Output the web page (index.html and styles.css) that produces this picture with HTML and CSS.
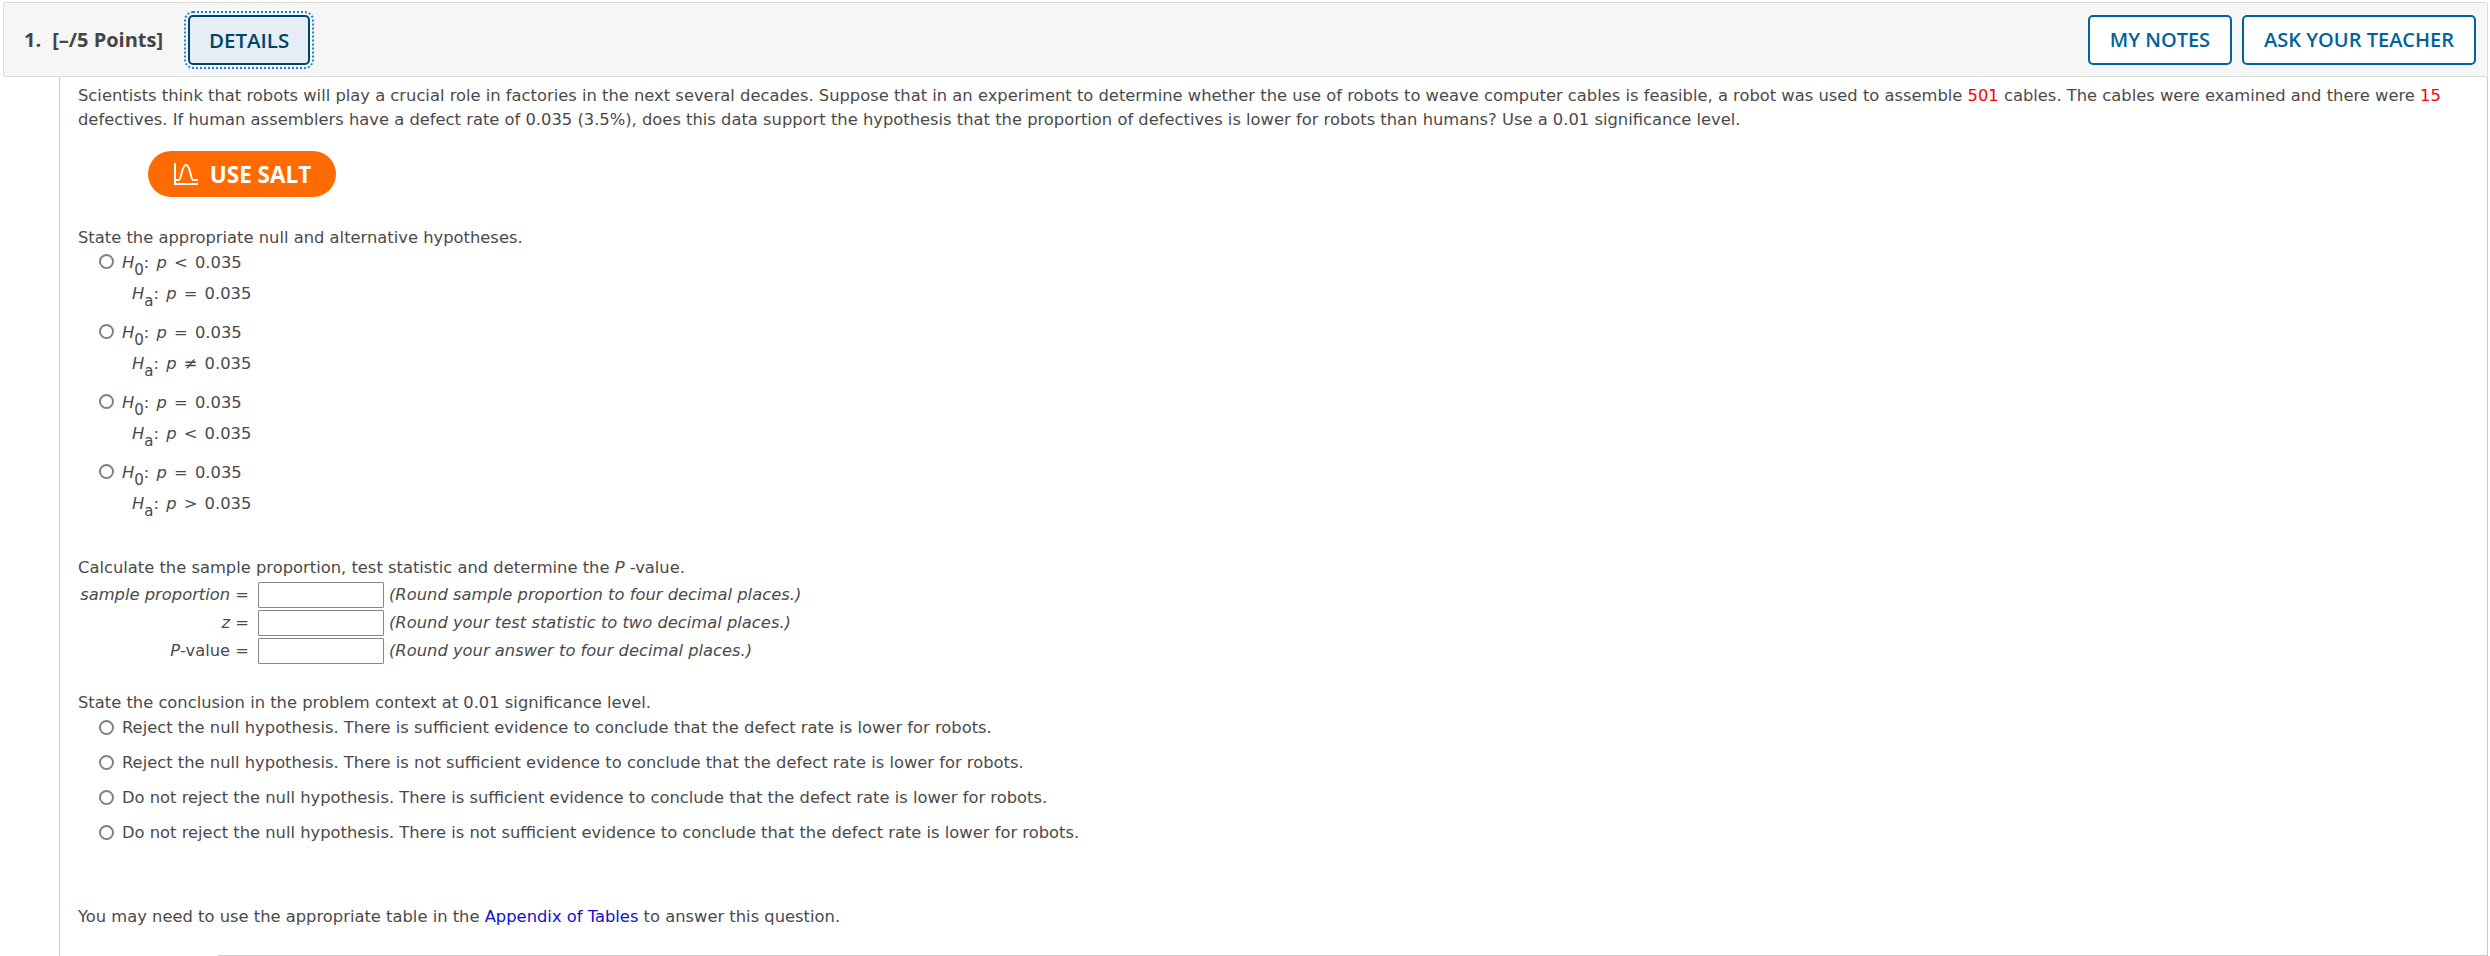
FILE: index.html
```html
<!DOCTYPE html>
<html lang="en">
<head>
  <meta charset="UTF-8">
  <title>Question 1</title>
  <link rel="stylesheet" href="styles.css">
</head>
<body>
  <div class="question-bar">
    <div class="question-title">
      <span class="question-num">1.</span>
      <span>[–/5 Points]</span>
      <button class="btn btn-details">DETAILS</button>
    </div>
    <div class="question-actions">
      <button class="btn">MY NOTES</button>
      <button class="btn">ASK YOUR TEACHER</button>
    </div>
  </div>

  <div class="question-body">
    <p class="prompt">Scientists think that robots will play a crucial role in factories in the next several decades. Suppose that in an experiment to determine whether the use of robots to weave computer cables is feasible, a robot was used to assemble <span class="red">501</span> cables. The cables were examined and there were <span class="red">15</span> defectives. If human assemblers have a defect rate of 0.035 (3.5%), does this data support the hypothesis that the proportion of defectives is lower for robots than humans? Use a 0.01 significance level.</p>

    <button class="salt">
      <svg width="26" height="22" viewBox="0 0 26 22" fill="none" stroke="#fff" stroke-width="2">
        <path d="M2 0V21H25"/>
        <path d="M2 17H6C8.500 17 8.500 2 13 2C17.500 2 17.500 17 20 17H25"/>
      </svg>
      USE SALT
    </button>

    <p class="section-label hyp-label">State the appropriate null and alternative hypotheses.</p>
    <div class="hyp-list">
      <div class="hyp">
        <div class="hyp-line"><span class="radio"></span><i>H</i><sub>0</sub>: <i>p</i> &lt; 0.035</div>
        <div class="hyp-line alt"><i>H</i><sub>a</sub>: <i>p</i> = 0.035</div>
      </div>
      <div class="hyp">
        <div class="hyp-line"><span class="radio"></span><i>H</i><sub>0</sub>: <i>p</i> = 0.035</div>
        <div class="hyp-line alt"><i>H</i><sub>a</sub>: <i>p</i> ≠ 0.035</div>
      </div>
      <div class="hyp">
        <div class="hyp-line"><span class="radio"></span><i>H</i><sub>0</sub>: <i>p</i> = 0.035</div>
        <div class="hyp-line alt"><i>H</i><sub>a</sub>: <i>p</i> &lt; 0.035</div>
      </div>
      <div class="hyp">
        <div class="hyp-line"><span class="radio"></span><i>H</i><sub>0</sub>: <i>p</i> = 0.035</div>
        <div class="hyp-line alt"><i>H</i><sub>a</sub>: <i>p</i> &gt; 0.035</div>
      </div>
    </div>

    <p class="section-label calc-label">Calculate the sample proportion, test statistic and determine the <i>P</i> -value.</p>
    <div class="calc-grid">
      <span class="calc-name"><i>sample proportion</i> =</span>
      <input type="text" class="answer">
      <i>(Round sample proportion to four decimal places.)</i>
      <span class="calc-name"><i>z</i> =</span>
      <input type="text" class="answer">
      <i>(Round your test statistic to two decimal places.)</i>
      <span class="calc-name"><i>P</i>-value =</span>
      <input type="text" class="answer">
      <i>(Round your answer to four decimal places.)</i>
    </div>

    <p class="section-label concl-label">State the conclusion in the problem context at 0.01 significance level.</p>
    <div class="concl-list">
      <div class="concl"><span class="radio"></span>Reject the null hypothesis. There is sufficient evidence to conclude that the defect rate is lower for robots.</div>
      <div class="concl"><span class="radio"></span>Reject the null hypothesis. There is not sufficient evidence to conclude that the defect rate is lower for robots.</div>
      <div class="concl"><span class="radio"></span>Do not reject the null hypothesis. There is sufficient evidence to conclude that the defect rate is lower for robots.</div>
      <div class="concl"><span class="radio"></span>Do not reject the null hypothesis. There is not sufficient evidence to conclude that the defect rate is lower for robots.</div>
    </div>

    <p class="section-label appendix">You may need to use the appropriate table in the <a href="#">Appendix of Tables</a> to answer this question.</p>
    <div class="bottom-rule"></div>
  </div>
</body>
</html>
```

FILE: styles.css
```css
* {
  box-sizing: border-box;
}

body {
  margin: 0;
  padding: 2px 2px 0 3px;
  height: 956px;
  overflow: hidden;
  background-color: #fff;
  color: #4a4a4a;
  font-family: "DejaVu Sans", Verdana, sans-serif;
  font-size: 16.330px;
  line-height: 24px;
}

.question-bar {
  height: 75px;
  padding: 0 11px 0 20px;
  display: flex;
  justify-content: space-between;
  align-items: center;
  background-color: #f6f6f6;
  border: 1px solid #ddd;
  border-radius: 2px;
}

.question-title {
  display: flex;
  align-items: center;
  font-family: "Open Sans", sans-serif;
  font-size: 20px;
  font-weight: 700;
  color: #444;
}

.question-num {
  margin-right: 11px;
}

.question-actions {
  display: flex;
  gap: 10px;
}

.btn {
  height: 50px;
  padding: 0 20px;
  background-color: #fff;
  border: 2px solid #00639b;
  border-radius: 5px;
  color: #00639b;
  font-family: "Open Sans", sans-serif;
  font-size: 20px;
  font-weight: 600;
}

.btn-details {
  margin-left: 25px;
  width: 122px;
  padding: 0;
  background-color: #e6eef5;
  border-color: #00436b;
  color: #00436b;
  font-size: 20.500px;
  outline: 2px dotted #0a84e0;
  outline-offset: 2px;
}

.question-body {
  margin-left: 56px;
  padding: 7px 0 0 18px;
  height: 879px;
  position: relative;
  border-left: 1px solid #c8c8c8;
  border-right: 1px solid #c8c8c8;
}

p {
  margin: 0;
}

.red {
  color: #f00;
}

.salt {
  margin: 19px 0 0 70px;
  padding-top: 1px;
  width: 188px;
  height: 46px;
  display: flex;
  align-items: center;
  justify-content: center;
  gap: 11px;
  background-color: #ff6b00;
  border: none;
  border-radius: 23px;
  color: #fff;
  font-family: "Open Sans", sans-serif;
  font-size: 22.500px;
  font-weight: 700;
}

.hyp-label {
  margin-top: 29px;
}

.hyp-list {
  margin: 1px 0 0 21px;
}

.hyp {
  margin-bottom: 14px;
}

.hyp-line {
  height: 25px;
  white-space: pre;
  word-spacing: 2px;
}

.hyp-line + .hyp-line {
  margin-top: 6px;
}

.alt {
  padding-left: 33px;
}

sub {
  font-size: 15px;
  line-height: 0;
  vertical-align: -7px;
}

.radio {
  display: inline-block;
  vertical-align: -1px;
  width: 15px;
  height: 15px;
  margin-right: 8px;
  background-color: #fff;
  border: 2px solid #808080;
  border-radius: 50%;
}

.calc-label {
  margin-top: 39px;
}

.calc-grid {
  display: grid;
  grid-template-columns: 180px 127px 1fr;
  grid-auto-rows: 28px;
  align-items: center;
  margin-top: 1px;
}

.calc-name {
  text-align: right;
  padding-right: 9px;
}

.answer {
  width: 126px;
  height: 26px;
  padding: 0;
  background-color: #fff;
  border: 1px solid #888;
  border-radius: 1px;
}

.calc-grid > i {
  padding-left: 4px;
}

.concl-label {
  margin-top: 26px;
}

.concl-list {
  margin-left: 21px;
  margin-top: -5px;
}

.concl {
  display: flex;
  align-items: center;
  height: 35px;
}

a {
  color: #1010c8;
  text-decoration: none;
}

.appendix {
  margin-top: 55px;
}

.bottom-rule {
  position: absolute;
  left: 158px;
  right: 0;
  bottom: 0;
  height: 1px;
  background-color: #c8c8c8;
}
```
